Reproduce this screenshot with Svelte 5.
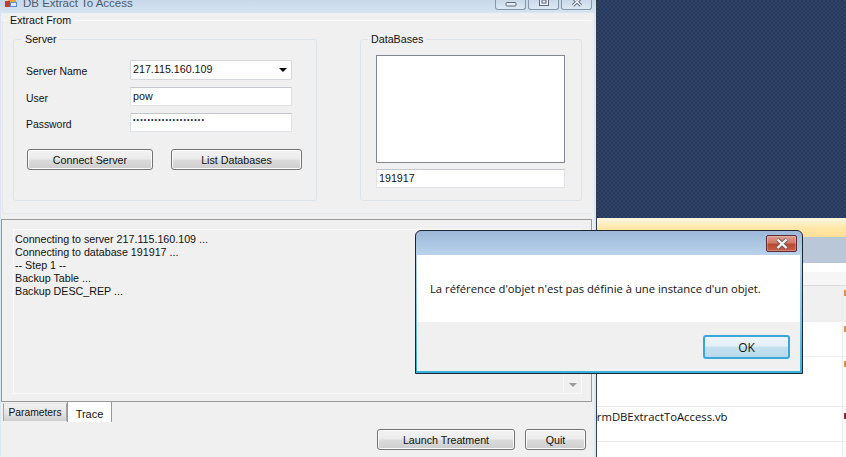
<script>
  const logLines = [
    'Connecting to server 217.115.160.109 ...',
    'Connecting to database 191917 ...',
    '-- Step 1 --',
    'Backup Table ...',
    'Backup DESC_REP ...'
  ];
</script>

<div class="desk">
  <section class="win">
    <header class="title">
      <svg class="appicon" width="13" height="8" viewBox="0 0 13 8">
        <rect x="3" y="0" width="8" height="3" fill="#e9a23c"/>
        <rect x="0" y="2" width="5" height="6" fill="#c93a2a"/>
        <rect x="5" y="3" width="7" height="5" fill="#5f8fd0"/>
        <rect x="6" y="4" width="5" height="3" fill="#dfe9f5"/>
      </svg>
      <span class="caption">DB Extract To Access</span>
      <div class="winbtns">
        <div class="wb"><svg width="30" height="9" viewBox="0 0 30 9"><rect x="10" y="2.5" width="10" height="3.5" rx="1" fill="#e7edf4" stroke="#5d6b7c"/></svg></div>
        <div class="wb"><svg width="30" height="9" viewBox="0 0 30 9"><rect x="10.5" y="-3" width="9" height="8.5" fill="#e7edf4" stroke="#5d6b7c"/><rect x="13" y="0" width="4" height="3" fill="none" stroke="#5d6b7c"/></svg></div>
        <div class="wb"><svg width="30" height="9" viewBox="0 0 30 9"><path d="M11 -2 L19 5.5 M19 -2 L11 5.5" stroke="#5d6b7c" stroke-width="3.2"/><path d="M11 -2 L19 5.5 M19 -2 L11 5.5" stroke="#eef2f7" stroke-width="1.4"/></svg></div>
      </div>
    </header>

    <div class="client">
      <fieldset class="extract">
        <legend>Extract From</legend>
        <div class="groups">
          <fieldset class="server">
            <legend>Server</legend>
            <div class="form">
              <span class="lbl">Server Name</span>
              <div class="box combo">217.115.160.109<i class="arrow"></i></div>
              <span class="lbl">User</span>
              <div class="box">pow</div>
              <span class="lbl">Password</span>
              <div class="box pass">••••••••••••••••••••</div>
            </div>
            <div class="actions">
              <button class="btn connect">Connect Server</button>
              <button class="btn listdb">List Databases</button>
            </div>
          </fieldset>

          <fieldset class="databases">
            <legend>DataBases</legend>
            <div class="listbox"></div>
            <div class="box dbname">191917</div>
          </fieldset>
        </div>
      </fieldset>

      <div class="page">
        <div class="log">
          <div class="lines">
            {#each logLines as line}<div>{line}</div>{/each}
          </div>
          <div class="scroll"><div class="down"><i></i></div></div>
        </div>
      </div>

      <div class="tabs">
        <div class="tab off">Parameters</div>
        <div class="tab on">Trace</div>
      </div>

      <div class="foot">
        <button class="btn launch">Launch Treatment</button>
        <button class="btn quit">Quit</button>
      </div>
    </div>
  </section>

  <aside class="ide">
    <div class="navy"></div>
    <div class="yellow"></div>
    <div class="band"></div>
    <div class="spacer"></div>
    <div class="thead"></div>
    <div class="row r1"><i class="tick"></i></div>
    <div class="row r2"><i class="tick"></i></div>
    <div class="row r3"><i class="tick"></i></div>
    <div class="row r4"><span>frmDBExtractToAccess.vb</span><i class="tick red"></i></div>
    <div class="row r5"></div>
  </aside>

  <div class="dialog">
    <div class="dtitle">
      <div class="close">
        <svg width="16" height="12" viewBox="0 0 16 12"><path d="M3.5 1.5 L12.5 10 M12.5 1.5 L3.5 10" stroke="#6b5a5c" stroke-width="4"/><path d="M3.5 1.5 L12.5 10 M12.5 1.5 L3.5 10" stroke="#f4f4f4" stroke-width="2.4"/></svg>
      </div>
    </div>
    <div class="dbody">La référence d'objet n'est pas définie à une instance d'un objet.</div>
    <div class="dfoot"><button class="okbtn">OK</button></div>
  </div>
</div>

<style>
  :global(body) { margin: 0; background: #fff; }

  .desk {
    position: relative;
    display: flex;
    width: 846px;
    height: 457px;
    overflow: hidden;
    font-family: "Liberation Sans", Arial, sans-serif;
    font-size: 10.7px;
    color: #111;
  }

  /* main window */
  .win {
    display: flex;
    flex-direction: column;
    box-sizing: border-box;
    width: 597px;
    height: 457px;
    flex: none;
    background: #dbe6f2;
    border-right: 1px solid #33414f;
    padding-left: 1px;
    padding-right: 2px;
  }
  .title {
    display: flex;
    align-items: flex-end;
    height: 13px;
    flex: none;
    margin-left: -1px;
    margin-right: -2px;
    background: linear-gradient(#c7d8ea, #d7e4f1);
    overflow: hidden;
    position: relative;
  }
  .appicon { margin: 0 5px 6px 5px; flex: none; }
  .caption {
    font-size: 11.5px;
    line-height: 14px;
    color: #4d5b6b;
    margin-bottom: 3px;
  }
  .winbtns {
    display: flex;
    gap: 2px;
    margin-left: auto;
    margin-right: 4px;
    align-self: flex-start;
  }
  .wb {
    box-sizing: border-box;
    width: 31px;
    height: 10px;
    border: 1px solid #8797aa;
    border-top: 0;
    border-radius: 0 0 3px 3px;
    background: linear-gradient(#c9d9ea, #dde8f3);
    display: flex;
    justify-content: center;
    overflow: hidden;
  }
  .wb svg { flex: none; }

  .client {
    flex: 1;
    min-height: 0;
    display: flex;
    flex-direction: column;
    background: #f0f0f0;
  }

  fieldset {
    margin: 0;
    min-width: 0;
    box-sizing: border-box;
    border: 1px solid #dde3ea;
    border-radius: 3px;
  }
  legend {
    line-height: 14px;
    padding: 0 3px;
    color: #111;
  }

  .extract {
    width: 591px;
    height: 201px;
    margin-left: 1px;
    padding: 5px 0 0 10px;
    border-color: #fbfbfb #e9edf2 #e3e8ee #e3e8ee;
    flex: none;
  }
  .extract > legend { margin-left: -6px; }
  .groups { display: flex; gap: 43px; align-items: flex-start; }

  .server {
    width: 304px;
    height: 169px;
    padding: 14px 0 0 12px;
  }
  .server > legend { margin-left: -4px; }
  .form {
    display: grid;
    grid-template-columns: 104px 162px;
    grid-template-rows: 20px 19px 19px;
    row-gap: 7px;
    align-items: center;
  }
  .lbl { line-height: 14px; padding-top: 4px; font-size: 10.4px; }

  .box {
    box-sizing: border-box;
    height: 100%;
    background: #fff;
    border: 1px solid #dfe3e8;
    border-top-color: #c4c8cd;
    border-radius: 1px;
    padding-left: 2px;
    line-height: 16px;
    white-space: nowrap;
  }
  .combo {
    display: flex;
    justify-content: space-between;
    align-items: center;
    border: 1px solid #d4d8dd;
    padding-left: 2px;
    padding-right: 4px;
    padding-bottom: 3px;
  }
  .arrow {
    width: 0;
    height: 0;
    border-left: 4px solid transparent;
    border-right: 4px solid transparent;
    border-top: 4px solid #000;
    margin-top: 3px;
  }
  .pass {
    font-size: 7px;
    line-height: 11px;
    letter-spacing: 1.15px;
    color: #0f2347;
    padding-left: 2px;
  }

  .actions { display: flex; gap: 18px; margin: 17px 0 0 1px; }

  .btn {
    box-sizing: border-box;
    height: 21px;
    padding: 0;
    font: inherit;
    color: #111;
    border: 1px solid #747474;
    border-radius: 3px;
    box-shadow: inset 0 0 0 1px #fbfbfb;
    background: linear-gradient(#f3f3f3 0, #ebebeb 48%, #dcdcdc 52%, #cdcdcd 100%);
  }
  .connect { width: 126px; }
  .listdb { width: 131px; }
  .launch { width: 138px; }
  .quit { width: 61px; }

  .databases {
    width: 222px;
    height: 169px;
    padding: 9px 0 0 15px;
  }
  .databases > legend { margin-left: -8px; }
  .listbox {
    box-sizing: border-box;
    width: 189px;
    height: 108px;
    background: #fff;
    border: 1px solid #82878f;
  }
  .dbname { width: 189px; height: 19px; margin-top: 6px; }

  /* trace page */
  .page {
    box-sizing: border-box;
    width: 591px;
    height: 183px;
    margin-top: 5px;
    flex: none;
    border: 1px solid #999;
    padding: 9px 9px 7px 11px;
  }
  .log {
    box-sizing: border-box;
    height: 100%;
    border: 1px solid #fafafa;
    display: flex;
    justify-content: space-between;
  }
  .lines { padding: 3px 0 0 1px; line-height: 13px; white-space: nowrap; }
  .scroll {
    width: 17px;
    border-left: 1px solid #f8f8f8;
    display: flex;
    flex-direction: column;
    justify-content: flex-end;
  }
  .down { height: 17px; display: flex; align-items: center; justify-content: center; }
  .down i {
    width: 0;
    height: 0;
    border-left: 4px solid transparent;
    border-right: 4px solid transparent;
    border-top: 4px solid #9a9a9a;
  }

  .tabs {
    display: flex;
    align-items: flex-start;
    padding-left: 2px;
    height: 20px;
    margin-top: -1px;
    flex: none;
  }
  .tab { box-sizing: border-box; text-align: center; }
  .tab.off {
    width: 64px;
    height: 18px;
    margin-top: 2px;
    line-height: 17px;
    font-size: 10.3px;
    border: 1px solid #a5a5a5;
    border-top: 1px solid #e6e6e6;
    border-bottom: 0;
    background: linear-gradient(#f0f0f0, #e4e4e4 55%, #cfcfcf);
  }
  .tab.on {
    width: 45px;
    height: 21px;
    line-height: 25px;
    font-size: 11px;
    background: #fff;
    border: 1px solid #999;
    border-bottom: 0;
  }

  .foot {
    display: flex;
    justify-content: flex-end;
    gap: 10px;
    padding-right: 8px;
    margin-top: 8px;
  }

  /* background IDE */
  .ide {
    flex: 1;
    min-width: 0;
    display: flex;
    flex-direction: column;
    overflow: hidden;
    background: #fff;
    font-family: "Open Sans", "Liberation Sans", sans-serif;
    font-size: 11.3px;
  }
  .navy {
    height: 218px;
    flex: none;
    background-color: #2f4468;
    background-image:
      radial-gradient(circle at 1px 1px, #27395a 0.8px, transparent 1px),
      radial-gradient(circle at 3px 3px, #27395a 0.8px, transparent 1px);
    background-size: 4px 4px;
  }
  .yellow { height: 19px; flex: none; background: linear-gradient(#fff7e0, #ffe6a6 55%, #ffdf96); }
  .band { height: 26px; flex: none; background: #bac7d8; }
  .spacer { height: 9px; flex: none; }
  .thead { height: 13px; flex: none; background: #f6f6f6; border-bottom: 1px solid #dcdcdc; }
  .row {
    box-sizing: border-box;
    flex: none;
    display: flex;
    justify-content: flex-end;
    border-bottom: 1px solid #ececec;
    position: relative;
  }
  .row::before {
    content: "";
    position: absolute;
    left: 245px;
    top: 0;
    bottom: 0;
    width: 1px;
    background: #ececec;
  }
  .tick { display: block; width: 2px; height: 6px; margin-top: 4px; background: #d9904f; flex: none; }
  .tick.red { background: #8a2c36; margin-top: 6px; }
  .r1 { height: 36px; background: #f0f0f0; }
  .r2 { height: 35px; }
  .r3 { height: 50px; }
  .r4 { height: 35px; line-height: 20px; }
  .r4 span { margin-left: -4px; margin-right: auto; white-space: nowrap; color: #111; }
  .r5 { flex: 1; border: 0; }

  /* message box */
  .dialog {
    position: absolute;
    left: 415px;
    top: 230px;
    box-sizing: border-box;
    width: 388px;
    height: 144px;
    display: flex;
    flex-direction: column;
    border: 1px solid #1c2630;
    border-radius: 6px 6px 0 0;
    padding: 0 2px 2px 1px;
    background: linear-gradient(#9db8d8 0, #b9d3ec 17%, #7cc3e6 60%, #37b2da 100%);
    font-family: "Open Sans", "Liberation Sans", sans-serif;
  }
  .dtitle {
    height: 24px;
    flex: none;
    display: flex;
    justify-content: flex-end;
    align-items: flex-start;
    padding: 4px 3px 0 0;
    box-sizing: border-box;
  }
  .close {
    box-sizing: border-box;
    width: 31px;
    height: 17px;
    border: 1px solid #5c2b33;
    border-radius: 2px;
    background: linear-gradient(#dc9b8f 0, #cf7a69 45%, #bb4a30 55%, #c4604c 100%);
    display: flex;
    align-items: center;
    justify-content: center;
    box-shadow: inset 0 0 0 1px rgba(255,255,255,.25);
  }
  .dbody {
    height: 67px;
    flex: none;
    box-sizing: border-box;
    background: #fff;
    padding-left: 13px;
    line-height: 68px;
    font-size: 11.26px;
    color: #111;
    white-space: nowrap;
  }
  .dfoot {
    flex: 1;
    background: #f0f0f0;
    display: flex;
    justify-content: flex-end;
    align-items: flex-start;
    padding: 13px 10px 0 0;
  }
  .okbtn {
    box-sizing: border-box;
    width: 87px;
    height: 24px;
    padding: 0;
    font: inherit;
    font-size: 12px;
    color: #111;
    border: 2px solid #3aa7da;
    border-radius: 3px;
    background: linear-gradient(#edf5fa 0, #e3f0f7 45%, #c4e0ef 52%, #b9d9ea 100%);
  }
</style>
